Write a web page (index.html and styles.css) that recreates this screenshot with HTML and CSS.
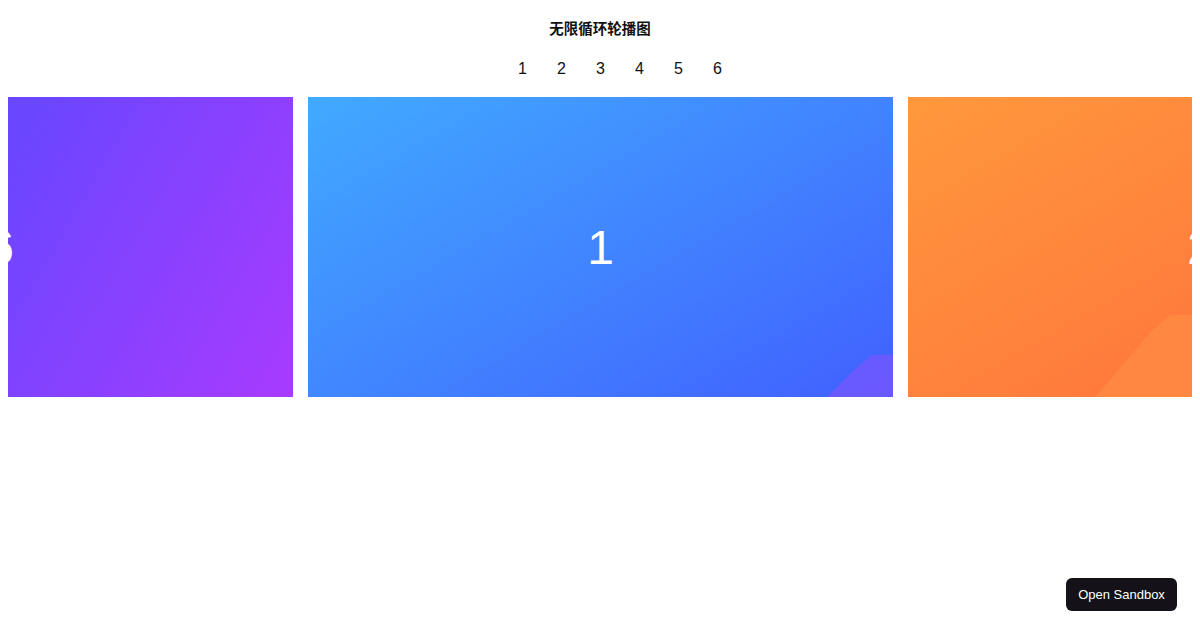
FILE: index.html
```html
<!DOCTYPE html>
<html lang="zh">
<head>
<meta charset="utf-8">
<title>轮播图</title>
<link rel="stylesheet" href="styles.css">
</head>
<body>
<h3 class="title">无限循环轮播图</h3>
<ul class="dots">
  <li>1</li><li>2</li><li>3</li><li>4</li><li>5</li><li>6</li>
</ul>
<div class="viewport">
  <div class="track">
    <div class="slide slide-purple"><span>6</span></div>
    <div class="slide slide-blue"><span>1</span></div>
    <div class="slide slide-orange"><span>2</span></div>
  </div>
</div>
<button class="sandbox">Open Sandbox</button>
</body>
</html>
```

FILE: styles.css
```css
body {
  margin: 8px;
  font-family: "Liberation Sans", Arial, "Noto Sans CJK SC", sans-serif;
  background: #fff;
  color: #111;
}
.title {
  margin: 10px 0 0;
  height: 20px;
  line-height: 20px;
  font-size: 14.5px;
  font-weight: 700;
  text-align: center;
  font-family: "Noto Sans CJK SC", sans-serif;
}
.dots {
  display: flex;
  justify-content: center;
  list-style: none;
  margin: 21px 0 0;
  padding-left: 40px;
  height: 20px;
  line-height: 20px;
  font-size: 16px;
}
.dots li {
  width: 39px;
  text-align: center;
}
.viewport {
  margin-top: 18px;
  width: 1184px;
  height: 300px;
  overflow: hidden;
}
.track {
  display: flex;
  gap: 15px;
  margin-left: -300px;
}
.slide {
  flex: 0 0 585px;
  height: 300px;
  display: flex;
  align-items: center;
  justify-content: center;
  color: #fff;
  font-size: 48px;
  position: relative;
  overflow: hidden;
}
.slide span { position: relative; z-index: 1; }
.slide-purple { background: linear-gradient(120deg, #4f4cff 0%, #6c46ff 45%, #a83bff 100%); }
.slide-blue { background: linear-gradient(150deg, #41aaff 0%, #4160ff 100%); }
.slide-orange { background: linear-gradient(150deg, #ff983c 0%, #ff6a3c 100%); }
.slide::after {
  content: "";
  position: absolute;
  bottom: 0;
}
.slide-blue::after {
  right: 0;
  width: 66px;
  height: 42px;
  background: #7a55ff;
  opacity: 0.7;
  clip-path: polygon(100% 0, 68% 0, 45% 30%, 0 100%, 100% 100%);
}
.slide-orange::after {
  left: 187px;
  width: 110px;
  height: 82px;
  background: #ff8a42;
  opacity: 0.85;
  clip-path: polygon(100% 0, 68% 0, 50% 22%, 0 100%, 100% 100%);
}
.sandbox {
  position: fixed;
  right: 23px;
  bottom: 19px;
  width: 111px;
  height: 33px;
  border: none;
  border-radius: 6px;
  background: #141218;
  color: #fff;
  font-family: "Liberation Sans", Arial, sans-serif;
  font-size: 13px;
  padding: 0;
}
```
